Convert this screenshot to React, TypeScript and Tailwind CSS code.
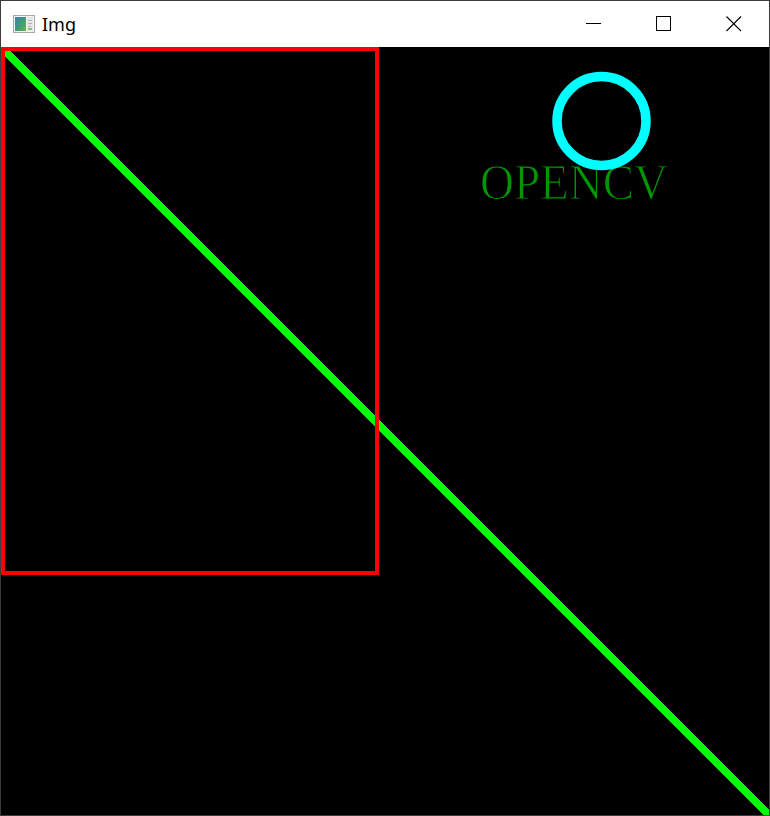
import React from 'react'

function AppIcon() {
  return (
    <svg width="22" height="18" viewBox="0 0 22 18">
      <defs>
        <linearGradient id="pane" x1="0" y1="0" x2="1" y2="1">
          <stop offset="0" stopColor="#3f7fb8" />
          <stop offset="0.5" stopColor="#3f9a78" />
          <stop offset="1" stopColor="#6bb24a" />
        </linearGradient>
      </defs>
      <rect x="0.5" y="0.5" width="21" height="17" fill="#f4f4f4" stroke="#a8a8a8" />
      <rect x="2" y="2" width="11" height="14" fill="url(#pane)" />
      <rect x="14" y="2" width="6" height="14" fill="#e6e6e6" />
      <rect x="15" y="5" width="4" height="1" fill="#b5b5b5" />
      <rect x="15" y="8" width="4" height="1" fill="#b5b5b5" />
      <rect x="15" y="11" width="3" height="1" fill="#b5b5b5" />
      <rect x="15" y="13" width="4" height="2" fill="#8fc08a" />
    </svg>
  )
}

function CaptionButton({ children }: { children: React.ReactNode }) {
  return (
    <div className="w-[70px] h-full flex items-center justify-center">
      <svg width="16" height="16" viewBox="0 0 16 16" shapeRendering="crispEdges">
        {children}
      </svg>
    </div>
  )
}

export default function App() {
  return (
    <div className="w-[770px] h-[816px] border border-[#3c3c3c] flex flex-col bg-white">
      {/* Title bar */}
      <div className="h-[46px] flex items-center bg-white">
        <div className="ml-[12px] flex items-center">
          <AppIcon />
        </div>
        <span
          className="ml-[7px] text-[18px] text-black leading-none"
          style={{ fontFamily: '"Noto Sans", "Open Sans", sans-serif' }}
        >
          Img
        </span>
        <div className="ml-auto flex h-full">
          <CaptionButton>
            <rect x="0" y="7" width="15" height="1" fill="#000" />
          </CaptionButton>
          <CaptionButton>
            <rect x="0.5" y="0.5" width="14" height="14" fill="none" stroke="#000" />
          </CaptionButton>
          <CaptionButton>
            <g shapeRendering="geometricPrecision">
              <line x1="0.5" y1="0.5" x2="15" y2="15" stroke="#000" strokeWidth="1.1" />
              <line x1="15" y1="0.5" x2="0.5" y2="15" stroke="#000" strokeWidth="1.1" />
            </g>
          </CaptionButton>
        </div>
      </div>

      {/* Canvas */}
      <svg width="768" height="768" viewBox="0 0 768 768" className="block bg-black">
        <rect x="0" y="0" width="768" height="768" fill="#000" />
        <line x1="0" y1="0" x2="768" y2="768" stroke="#00ff00" strokeWidth="8" shapeRendering="crispEdges" />
        <rect
          x="1.5"
          y="1.5"
          width="374.5"
          height="524.5"
          fill="none"
          stroke="#ff0000"
          strokeWidth="4.5"
          shapeRendering="crispEdges"
        />
        <text
          x="479"
          y="152"
          fill="#009600"
          stroke="#000"
          strokeWidth="1.1"
          fontSize="51"
          textLength="188"
          lengthAdjust="spacingAndGlyphs"
          style={{ fontFamily: '"Liberation Serif", "DejaVu Serif", serif' }}
        >
          OPENCV
        </text>
        <circle cx="600.5" cy="74" r="44.5" fill="none" stroke="#00ffff" strokeWidth="9.5" />
      </svg>
    </div>
  )
}
